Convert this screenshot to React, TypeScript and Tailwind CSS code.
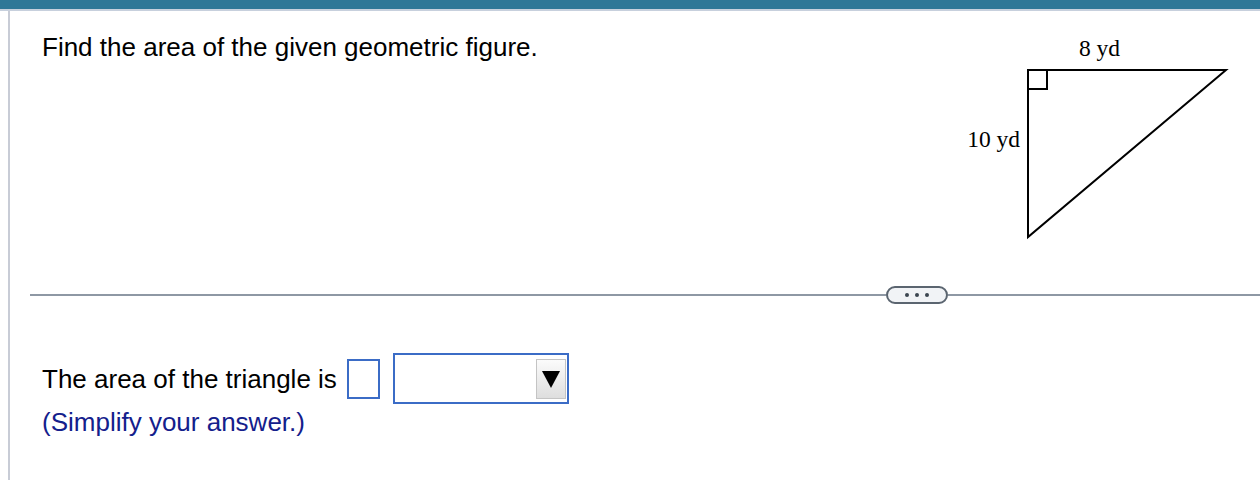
export default function App() {
  return (
    <div className="w-[1260px] h-[480px] bg-white overflow-hidden font-['Liberation_Sans',Arial,sans-serif]">
      <div className="h-[9px] bg-[#2f7797]" />
      <div className="h-[2px] bg-[#c7d0dd]" />
      <div className="ml-[8px] h-[469px] border-l-2 border-[#c8ccd6]">
        {/* question */}
        <div className="flex justify-between pl-[32px] h-[274px]">
          <p className="mt-[21px] text-[26px] leading-[30px] text-black">
            Find the area of the given geometric figure.
          </p>
          <svg width="300" height="240" viewBox="0 0 300 240" className="mr-[10px]">
            <text x="149.5" y="45" textAnchor="middle" fontFamily="Liberation Serif, Times New Roman, serif" fontSize="23.5" fill="#000">
              8 yd
            </text>
            <text x="70" y="136" textAnchor="end" fontFamily="Liberation Serif, Times New Roman, serif" fontSize="23.5" fill="#000">
              10 yd
            </text>
            <path d="M78 59 L276 59 L78 226 Z" fill="none" stroke="#000" strokeWidth="2" strokeLinejoin="miter" />
            <path d="M78 78 L97 78 L97 59" fill="none" stroke="#000" strokeWidth="2" />
          </svg>
        </div>

        {/* divider */}
        <div className="flex items-center h-[20px] ml-[20px]">
          <div className="w-[856px] h-[2px] bg-[#8e98a4]" />
          <div className="w-[62px] h-[18px] rounded-full border-2 border-[#5b6570] bg-[#f1f3f6] flex items-center justify-center gap-[6px]">
            <span className="w-[4px] h-[4px] rounded-full bg-[#3c4650]" />
            <span className="w-[4px] h-[4px] rounded-full bg-[#3c4650]" />
            <span className="w-[4px] h-[4px] rounded-full bg-[#3c4650]" />
          </div>
          <div className="flex-1 h-[2px] bg-[#8e98a4]" />
        </div>

        {/* answer */}
        <div className="pl-[32px] mt-[48px]">
          <div className="flex items-center h-[51px]">
            <span className="text-[26px] leading-[30px] text-black">The area of the triangle is</span>
            <div className="ml-[10px] w-[33px] h-[40px] border-2 border-[#3b6cc6] bg-white" />
            <div className="ml-[13px] w-[176px] h-[51px] border-2 border-[#3b6cc6] bg-white flex items-start justify-end pt-[4px] pr-[1px]">
              <div className="w-[30px] h-[40px] border border-[#c4c4c4] bg-gradient-to-b from-[#fbfbfb] to-[#dedede] flex items-center justify-center">
                <svg width="18" height="17" viewBox="0 0 18 17">
                  <path d="M0 0 L18 0 L9 17 Z" fill="#000" />
                </svg>
              </div>
            </div>
          </div>
          <p className="mt-[3px] text-[26px] leading-[30px] text-[#14208c]">(Simplify your answer.)</p>
        </div>
      </div>
    </div>
  );
}
